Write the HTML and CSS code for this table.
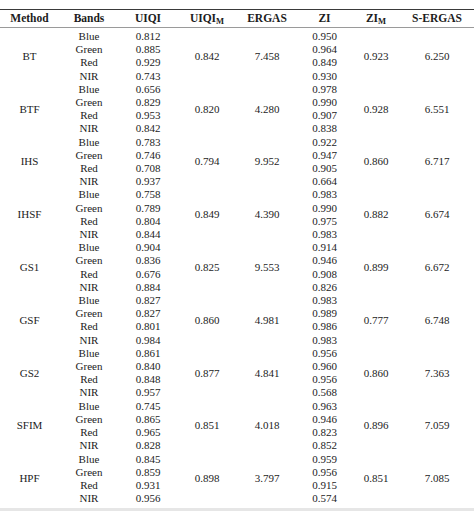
FILE: index.html
```html
<!DOCTYPE html>
<html>
<head>
<meta charset="utf-8">
<link rel="stylesheet" href="styles.css">
</head>
<body>
<div class="page">
<table class="results">
  <colgroup>
    <col class="c-method"><col class="c-bands"><col class="c-uiqi"><col class="c-uiqim">
    <col class="c-ergas"><col class="c-zi"><col class="c-zim"><col class="c-sergas">
  </colgroup>
  <thead>
    <tr>
      <th>Method</th><th>Bands</th><th>UIQI</th><th>UIQI<sub>M</sub></th>
      <th>ERGAS</th><th>ZI</th><th>ZI<sub>M</sub></th><th>S-ERGAS</th>
    </tr>
  </thead>
  <tbody>
    <tr class="first"><td rowspan="4">BT</td><td>Blue</td><td>0.812</td><td rowspan="4">0.842</td><td rowspan="4">7.458</td><td>0.950</td><td rowspan="4">0.923</td><td rowspan="4">6.250</td></tr>
    <tr><td>Green</td><td>0.885</td><td>0.964</td></tr>
    <tr><td>Red</td><td>0.929</td><td>0.849</td></tr>
    <tr><td>NIR</td><td>0.743</td><td>0.930</td></tr>

    <tr><td rowspan="4">BTF</td><td>Blue</td><td>0.656</td><td rowspan="4">0.820</td><td rowspan="4">4.280</td><td>0.978</td><td rowspan="4">0.928</td><td rowspan="4">6.551</td></tr>
    <tr><td>Green</td><td>0.829</td><td>0.990</td></tr>
    <tr><td>Red</td><td>0.953</td><td>0.907</td></tr>
    <tr><td>NIR</td><td>0.842</td><td>0.838</td></tr>

    <tr><td rowspan="4">IHS</td><td>Blue</td><td>0.783</td><td rowspan="4">0.794</td><td rowspan="4">9.952</td><td>0.922</td><td rowspan="4">0.860</td><td rowspan="4">6.717</td></tr>
    <tr><td>Green</td><td>0.746</td><td>0.947</td></tr>
    <tr><td>Red</td><td>0.708</td><td>0.905</td></tr>
    <tr><td>NIR</td><td>0.937</td><td>0.664</td></tr>

    <tr><td rowspan="4">IHSF</td><td>Blue</td><td>0.758</td><td rowspan="4">0.849</td><td rowspan="4">4.390</td><td>0.983</td><td rowspan="4">0.882</td><td rowspan="4">6.674</td></tr>
    <tr><td>Green</td><td>0.789</td><td>0.990</td></tr>
    <tr><td>Red</td><td>0.804</td><td>0.975</td></tr>
    <tr><td>NIR</td><td>0.844</td><td>0.983</td></tr>

    <tr><td rowspan="4">GS1</td><td>Blue</td><td>0.904</td><td rowspan="4">0.825</td><td rowspan="4">9.553</td><td>0.914</td><td rowspan="4">0.899</td><td rowspan="4">6.672</td></tr>
    <tr><td>Green</td><td>0.836</td><td>0.946</td></tr>
    <tr><td>Red</td><td>0.676</td><td>0.908</td></tr>
    <tr><td>NIR</td><td>0.884</td><td>0.826</td></tr>

    <tr><td rowspan="4">GSF</td><td>Blue</td><td>0.827</td><td rowspan="4">0.860</td><td rowspan="4">4.981</td><td>0.983</td><td rowspan="4">0.777</td><td rowspan="4">6.748</td></tr>
    <tr><td>Green</td><td>0.827</td><td>0.989</td></tr>
    <tr><td>Red</td><td>0.801</td><td>0.986</td></tr>
    <tr><td>NIR</td><td>0.984</td><td>0.983</td></tr>

    <tr><td rowspan="4">GS2</td><td>Blue</td><td>0.861</td><td rowspan="4">0.877</td><td rowspan="4">4.841</td><td>0.956</td><td rowspan="4">0.860</td><td rowspan="4">7.363</td></tr>
    <tr><td>Green</td><td>0.840</td><td>0.960</td></tr>
    <tr><td>Red</td><td>0.848</td><td>0.956</td></tr>
    <tr><td>NIR</td><td>0.957</td><td>0.568</td></tr>

    <tr><td rowspan="4">SFIM</td><td>Blue</td><td>0.745</td><td rowspan="4">0.851</td><td rowspan="4">4.018</td><td>0.963</td><td rowspan="4">0.896</td><td rowspan="4">7.059</td></tr>
    <tr><td>Green</td><td>0.865</td><td>0.946</td></tr>
    <tr><td>Red</td><td>0.965</td><td>0.823</td></tr>
    <tr><td>NIR</td><td>0.828</td><td>0.852</td></tr>

    <tr><td rowspan="4">HPF</td><td>Blue</td><td>0.845</td><td rowspan="4">0.898</td><td rowspan="4">3.797</td><td>0.959</td><td rowspan="4">0.851</td><td rowspan="4">7.085</td></tr>
    <tr><td>Green</td><td>0.859</td><td>0.956</td></tr>
    <tr><td>Red</td><td>0.931</td><td>0.915</td></tr>
    <tr><td>NIR</td><td>0.956</td><td>0.574</td></tr>
  </tbody>
</table>
<div class="footer-bar"></div>
</div>
</body>
</html>
```

FILE: styles.css
```css
html, body {
  margin: 0;
  padding: 0;
  background: #ffffff;
}

.page {
  width: 474px;
  height: 511px;
  overflow: hidden;
  padding-top: 9px;
  box-sizing: border-box;
  display: flex;
  flex-direction: column;
  font-family: "Liberation Serif", "Times New Roman", serif;
  color: #1c1c1c;
}

.results {
  width: 474px;
  table-layout: fixed;
  border-collapse: collapse;
  font-size: 11px;
  flex: none;
}

.c-method { width: 59px; }
.c-bands { width: 60px; }
.c-uiqi { width: 58px; }
.c-uiqim { width: 60px; }
.c-ergas { width: 60px; }
.c-zi { width: 55px; }
.c-zim { width: 48px; }
.c-sergas { width: 74px; }

.results thead th {
  border-top: 1.5px solid #3a3a3a;
  border-bottom: 1px solid #9a9a9a;
  height: 17px;
  padding: 0;
  font-weight: bold;
  font-size: 11.5px;
  line-height: 17px;
  text-align: center;
  vertical-align: middle;
}

.results sub {
  font-size: 8.5px;
  vertical-align: -2px;
  line-height: 0;
}

.results tbody td {
  padding: 0;
  height: 13.2px;
  line-height: 13.2px;
  text-align: center;
  vertical-align: middle;
  white-space: nowrap;
}

.results tbody tr.first td {
  padding-top: 2px;
}

.footer-bar {
  margin-top: auto;
  height: 3px;
  background: #e6e6e6;
  flex: none;
}
```
